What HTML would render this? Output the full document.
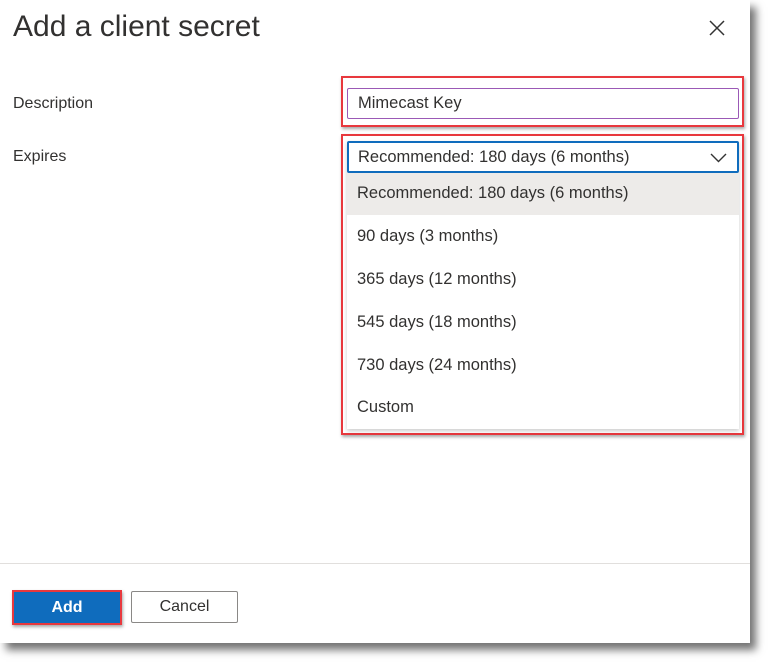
<!DOCTYPE html>
<html><head><style>
body{margin:0;width:775px;height:667px;background:#fff;position:relative;overflow:hidden;font-family:"Liberation Sans",sans-serif;color:#323130}
.abs{position:absolute}
.panel{left:0;top:0;width:750px;height:643px;background:#fff;box-shadow:6px 7px 8px rgba(0,0,0,.55)}
h1{position:absolute;left:13px;top:10px;margin:0;font-size:30px;font-weight:normal;color:#323130}
.lbl{font-size:16px;color:#323130}
.red{border:2px solid #e8383d;box-shadow:1px 2px 3px rgba(0,0,0,.35)}
.item{position:absolute;left:0;width:392px;height:43px;line-height:43px;padding-left:10px;box-sizing:border-box;font-size:16.5px;color:#323130}
</style></head><body>
<div class="abs panel"></div>
<h1>Add a client secret</h1>
<svg class="abs" style="left:708px;top:19px" width="18" height="18" viewBox="0 0 18 18"><path d="M2 2L16 16M16 2L2 16" stroke="#333" stroke-width="1.5"/></svg>
<div class="abs lbl" style="left:13px;top:95px">Description</div>
<div class="abs lbl" style="left:13px;top:148px">Expires</div>
<div class="abs red" style="left:341px;top:76px;width:399px;height:47px"></div>
<div class="abs" style="left:347px;top:88px;width:392px;height:31px;border:1px solid #9b59b6;border-radius:2px;font-size:16.5px;line-height:29px;padding-left:10px;box-sizing:border-box">Mimecast Key</div>
<div class="abs red" style="left:341px;top:134px;width:399px;height:297px"></div>
<div class="abs" style="left:347px;top:141px;width:392px;height:288px;background:#fff;box-shadow:0 2px 4px rgba(0,0,0,.2)">
<div class="item" style="top:31px;background:#edebe9">Recommended: 180 days (6 months)</div>
<div class="item" style="top:74px">90 days (3 months)</div>
<div class="item" style="top:117px">365 days (12 months)</div>
<div class="item" style="top:160px">545 days (18 months)</div>
<div class="item" style="top:203px">730 days (24 months)</div>
<div class="item" style="top:245px">Custom</div>
</div>
<div class="abs" style="left:347px;top:141px;width:392px;height:32px;border:2px solid #0f6cbd;border-radius:2px;font-size:16.5px;line-height:28px;padding-left:9px;box-sizing:border-box;background:#fff">Recommended: 180 days (6 months)
<svg class="abs" style="right:10px;top:10px" width="17" height="10" viewBox="0 0 17 10"><path d="M1 1L8.5 8.5L16 1" stroke="#333" stroke-width="1.4" fill="none"/></svg></div>
<div class="abs" style="left:0;top:563px;width:750px;height:1px;background:#e1dfdd"></div>
<div class="abs red" style="left:12px;top:590px;width:106px;height:31px;background:#0f6cbd;color:#fff;font-weight:bold;font-size:16px;text-align:center;line-height:31px">Add</div>
<div class="abs" style="left:131px;top:591px;width:105px;height:30px;border:1px solid #8a8886;border-radius:2px;font-size:16px;text-align:center;line-height:30px">Cancel</div>
</body></html>
